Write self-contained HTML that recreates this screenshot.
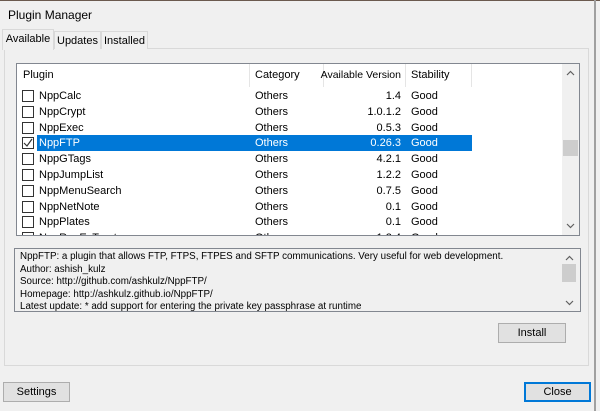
<!DOCTYPE html>
<html><head><style>
*{margin:0;padding:0;box-sizing:border-box}
body{width:600px;height:411px;background:#f0f0f0;font-family:"Liberation Sans",sans-serif;font-size:11px;color:#000;position:relative;overflow:hidden}
.a{position:absolute;white-space:nowrap}
.tab{position:absolute;top:31px;height:18px;border:1px solid #d9d9d9;border-bottom:none;background:#f0f0f0;padding:3px 0 0 0;text-align:center}
.row{position:absolute;left:0;width:455px;height:16px;line-height:16px}
.row span{position:absolute;top:0;white-space:nowrap}
.cb{position:absolute;left:5px;top:2px;width:12px;height:12px;border:1px solid #333;background:#fff}
.btn{position:absolute;border:1px solid #adadad;background:#e1e1e1;text-align:center;line-height:18px}
</style></head><body>
<div class="a" style="left:0;top:0;width:600px;height:1px;background:#6b5a4e"></div>
<div class="a" style="left:594px;top:0;width:2px;height:411px;background:#a0a0a0"></div>
<div class="a" style="left:8px;top:8px;font-size:12px">Plugin Manager</div>
<div class="a" style="left:4px;top:48px;width:585px;height:318px;border:1px solid #d9d9d9;background:#f0f0f0"></div>
<div class="tab" style="left:54px;width:47px">Updates</div>
<div class="tab" style="left:101px;width:47px">Installed</div>
<div class="tab" style="left:2px;top:29px;height:21px;width:52px;background:#f0f0f0;border-color:#d9d9d9">Available</div>

<div class="a" style="left:16px;top:63px;width:564px;height:173px;border:1px solid #828790;background:#fff;overflow:hidden">
 <div class="a" style="left:0;top:0;width:545px;height:23px;line-height:23px">
  <span class="a" style="left:6px">Plugin</span>
  <div class="a" style="left:232px;top:0;width:1px;height:23px;background:#e5e5e5"></div>
  <span class="a" style="left:238px">Category</span>
  <div class="a" style="left:306px;top:0;width:1px;height:23px;background:#e5e5e5"></div>
  <span class="a" style="left:300px;width:84px;text-align:right;font-size:10.5px">Available Version</span>
  <div class="a" style="left:388px;top:0;width:1px;height:23px;background:#e5e5e5"></div>
  <span class="a" style="left:394px">Stability</span>
  <div class="a" style="left:454px;top:0;width:1px;height:23px;background:#e5e5e5"></div>
 </div>
 <div class="a" style="left:0;top:24px;width:545px;height:150px">
  <div class="row" style="top:0"><div class="cb"></div><span style="left:22px">NppCalc</span><span style="left:238px">Others</span><span style="left:300px;width:84px;text-align:right">1.4</span><span style="left:394px">Good</span></div>
  <div class="row" style="top:15.8px"><div class="cb"></div><span style="left:22px">NppCrypt</span><span style="left:238px">Others</span><span style="left:300px;width:84px;text-align:right">1.0.1.2</span><span style="left:394px">Good</span></div>
  <div class="row" style="top:31.6px"><div class="cb"></div><span style="left:22px">NppExec</span><span style="left:238px">Others</span><span style="left:300px;width:84px;text-align:right">0.5.3</span><span style="left:394px">Good</span></div>
  <div class="row" style="top:47.4px;color:#fff"><div class="a" style="left:20px;top:0;width:435px;height:16px;background:#0078d7"></div><div class="cb" style="border-color:#333"><svg width="10" height="10" style="position:absolute;left:0;top:0"><path d="M1 5 L4 8 L9 1" stroke="#333" fill="none" stroke-width="1.2"/></svg></div><span style="left:22px">NppFTP</span><span style="left:238px">Others</span><span style="left:300px;width:84px;text-align:right">0.26.3</span><span style="left:394px">Good</span></div>
  <div class="row" style="top:63.2px"><div class="cb"></div><span style="left:22px">NppGTags</span><span style="left:238px">Others</span><span style="left:300px;width:84px;text-align:right">4.2.1</span><span style="left:394px">Good</span></div>
  <div class="row" style="top:79px"><div class="cb"></div><span style="left:22px">NppJumpList</span><span style="left:238px">Others</span><span style="left:300px;width:84px;text-align:right">1.2.2</span><span style="left:394px">Good</span></div>
  <div class="row" style="top:94.8px"><div class="cb"></div><span style="left:22px">NppMenuSearch</span><span style="left:238px">Others</span><span style="left:300px;width:84px;text-align:right">0.7.5</span><span style="left:394px">Good</span></div>
  <div class="row" style="top:110.6px"><div class="cb"></div><span style="left:22px">NppNetNote</span><span style="left:238px">Others</span><span style="left:300px;width:84px;text-align:right">0.1</span><span style="left:394px">Good</span></div>
  <div class="row" style="top:126.4px"><div class="cb"></div><span style="left:22px">NppPlates</span><span style="left:238px">Others</span><span style="left:300px;width:84px;text-align:right">0.1</span><span style="left:394px">Good</span></div>
  <div class="row" style="top:142.2px"><div class="cb"></div><span style="left:22px">NppRegExTractor</span><span style="left:238px">Others</span><span style="left:300px;width:84px;text-align:right">1.2.4</span><span style="left:394px">Good</span></div>
 </div>
 <div class="a" style="left:545px;top:0;width:17px;height:171px;background:#f0f0f0">
  <svg class="a" style="left:4px;top:6px" width="9" height="6"><path d="M1 5 L4.5 1.5 L8 5" stroke="#606060" fill="none" stroke-width="1.2"/></svg>
  <div class="a" style="left:1px;top:76px;width:15px;height:16px;background:#cdcdcd"></div>
  <svg class="a" style="left:4px;top:159px" width="9" height="6"><path d="M1 1 L4.5 4.5 L8 1" stroke="#606060" fill="none" stroke-width="1.2"/></svg>
 </div>
</div>

<div class="a" style="left:14px;top:248px;width:567px;height:64px;border:1px solid #828790;background:#f0f0f0;line-height:12.6px;padding:2px 0 0 5px;font-size:9.8px">
NppFTP: a plugin that allows FTP, FTPS, FTPES and SFTP communications. Very useful for web development.<br>Author: ashish_kulz<br>Source: http://github.com/ashkulz/NppFTP/<br>Homepage: http://ashkulz.github.io/NppFTP/<br>Latest update: * add support for entering the private key passphrase at runtime
 <div class="a" style="left:546px;top:0;width:17px;height:62px">
  <svg class="a" style="left:4px;top:6px" width="9" height="6"><path d="M1 5 L4.5 1.5 L8 5" stroke="#606060" fill="none" stroke-width="1.2"/></svg>
  <div class="a" style="left:1px;top:15px;width:14px;height:18px;background:#cdcdcd"></div>
  <svg class="a" style="left:4px;top:51px" width="9" height="6"><path d="M1 1 L4.5 4.5 L8 1" stroke="#606060" fill="none" stroke-width="1.2"/></svg>
 </div>
</div>

<div class="btn" style="left:498px;top:323px;width:68px;height:20px">Install</div>
<div class="btn" style="left:3px;top:382px;width:67px;height:20px">Settings</div>
<div class="btn" style="left:524px;top:382px;width:67px;height:20px;border:1px solid #0078d7;box-shadow:inset 0 0 0 1px #0078d7">Close</div>
</body></html>
